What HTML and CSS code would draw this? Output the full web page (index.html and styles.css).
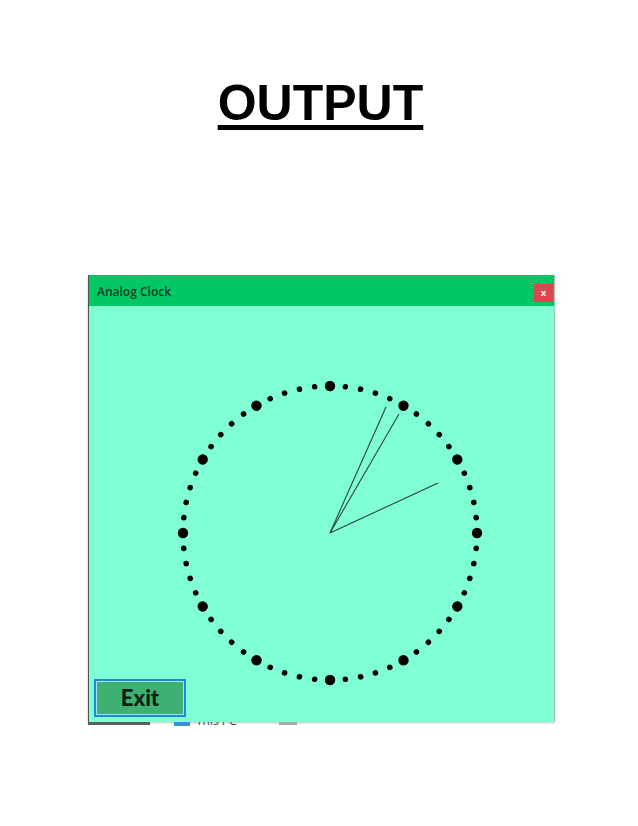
FILE: index.html
```html
<!DOCTYPE html>
<html>
<head>
<meta charset="utf-8">
<link rel="stylesheet" href="styles.css">
</head>
<body>
<h1 class="heading">OUTPUT</h1>
<div class="window">
  <div class="titlebar">
    <span class="title">Analog Clock</span>
    <span class="close">x</span>
  </div>
  <div class="client">
    <svg class="clock" width="467" height="416" viewBox="0 0 467 416">
      <g transform="translate(241 227)" fill="#000">
        <circle cx="0" cy="-147" r="5.2" transform="rotate(0)"/>
        <circle cx="0" cy="-147" r="2.8" transform="rotate(6)"/>
        <circle cx="0" cy="-147" r="2.8" transform="rotate(12)"/>
        <circle cx="0" cy="-147" r="2.8" transform="rotate(18)"/>
        <circle cx="0" cy="-147" r="2.8" transform="rotate(24)"/>
        <circle cx="0" cy="-147" r="5.2" transform="rotate(30)"/>
        <circle cx="0" cy="-147" r="2.8" transform="rotate(36)"/>
        <circle cx="0" cy="-147" r="2.8" transform="rotate(42)"/>
        <circle cx="0" cy="-147" r="2.8" transform="rotate(48)"/>
        <circle cx="0" cy="-147" r="2.8" transform="rotate(54)"/>
        <circle cx="0" cy="-147" r="5.2" transform="rotate(60)"/>
        <circle cx="0" cy="-147" r="2.8" transform="rotate(66)"/>
        <circle cx="0" cy="-147" r="2.8" transform="rotate(72)"/>
        <circle cx="0" cy="-147" r="2.8" transform="rotate(78)"/>
        <circle cx="0" cy="-147" r="2.8" transform="rotate(84)"/>
        <circle cx="0" cy="-147" r="5.2" transform="rotate(90)"/>
        <circle cx="0" cy="-147" r="2.8" transform="rotate(96)"/>
        <circle cx="0" cy="-147" r="2.8" transform="rotate(102)"/>
        <circle cx="0" cy="-147" r="2.8" transform="rotate(108)"/>
        <circle cx="0" cy="-147" r="2.8" transform="rotate(114)"/>
        <circle cx="0" cy="-147" r="5.2" transform="rotate(120)"/>
        <circle cx="0" cy="-147" r="2.8" transform="rotate(126)"/>
        <circle cx="0" cy="-147" r="2.8" transform="rotate(132)"/>
        <circle cx="0" cy="-147" r="2.8" transform="rotate(138)"/>
        <circle cx="0" cy="-147" r="2.8" transform="rotate(144)"/>
        <circle cx="0" cy="-147" r="5.2" transform="rotate(150)"/>
        <circle cx="0" cy="-147" r="2.8" transform="rotate(156)"/>
        <circle cx="0" cy="-147" r="2.8" transform="rotate(162)"/>
        <circle cx="0" cy="-147" r="2.8" transform="rotate(168)"/>
        <circle cx="0" cy="-147" r="2.8" transform="rotate(174)"/>
        <circle cx="0" cy="-147" r="5.2" transform="rotate(180)"/>
        <circle cx="0" cy="-147" r="2.8" transform="rotate(186)"/>
        <circle cx="0" cy="-147" r="2.8" transform="rotate(192)"/>
        <circle cx="0" cy="-147" r="2.8" transform="rotate(198)"/>
        <circle cx="0" cy="-147" r="2.8" transform="rotate(204)"/>
        <circle cx="0" cy="-147" r="5.2" transform="rotate(210)"/>
        <circle cx="0" cy="-147" r="2.8" transform="rotate(216)"/>
        <circle cx="0" cy="-147" r="2.8" transform="rotate(222)"/>
        <circle cx="0" cy="-147" r="2.8" transform="rotate(228)"/>
        <circle cx="0" cy="-147" r="2.8" transform="rotate(234)"/>
        <circle cx="0" cy="-147" r="5.2" transform="rotate(240)"/>
        <circle cx="0" cy="-147" r="2.8" transform="rotate(246)"/>
        <circle cx="0" cy="-147" r="2.8" transform="rotate(252)"/>
        <circle cx="0" cy="-147" r="2.8" transform="rotate(258)"/>
        <circle cx="0" cy="-147" r="2.8" transform="rotate(264)"/>
        <circle cx="0" cy="-147" r="5.2" transform="rotate(270)"/>
        <circle cx="0" cy="-147" r="2.8" transform="rotate(276)"/>
        <circle cx="0" cy="-147" r="2.8" transform="rotate(282)"/>
        <circle cx="0" cy="-147" r="2.8" transform="rotate(288)"/>
        <circle cx="0" cy="-147" r="2.8" transform="rotate(294)"/>
        <circle cx="0" cy="-147" r="5.2" transform="rotate(300)"/>
        <circle cx="0" cy="-147" r="2.8" transform="rotate(306)"/>
        <circle cx="0" cy="-147" r="2.8" transform="rotate(312)"/>
        <circle cx="0" cy="-147" r="2.8" transform="rotate(318)"/>
        <circle cx="0" cy="-147" r="2.8" transform="rotate(324)"/>
        <circle cx="0" cy="-147" r="5.2" transform="rotate(330)"/>
        <circle cx="0" cy="-147" r="2.8" transform="rotate(336)"/>
        <circle cx="0" cy="-147" r="2.8" transform="rotate(342)"/>
        <circle cx="0" cy="-147" r="2.8" transform="rotate(348)"/>
        <circle cx="0" cy="-147" r="2.8" transform="rotate(354)"/>
      </g>
      <g transform="translate(241 227)" stroke="#2a4439" stroke-width="1.1" fill="none">
        <line x1="0" y1="0" x2="56" y2="-126"/>
        <line x1="0" y1="0" x2="69" y2="-119"/>
        <line x1="0" y1="0" x2="108" y2="-50"/>
      </g>
    </svg>
    <button class="exit">Exit</button>
  </div>
</div>
<div class="strip">
  <span class="seg-dark"></span>
  <span class="seg-blue"></span>
  <span class="seg-text">This PC</span>
  <span class="seg-gray"></span>
</div>
</body>
</html>
```
FILE: styles.css
```css
html, body {
  margin: 0;
  padding: 0;
  background: #ffffff;
}
.heading {
  margin: 75px 0 0 0;
  padding: 0 0 0 3px;
  text-align: center;
  font-family: "Liberation Sans", Arial, sans-serif;
  font-weight: bold;
  font-size: 50px;
  line-height: 57px;
  color: #000;
  text-decoration: underline;
  text-decoration-thickness: 5px;
  text-underline-offset: 5px;
}
.window {
  box-sizing: border-box;
  margin: 143px 0 0 88px;
  width: 467px;
  border-left: 1px solid #4d5552;
  border-right: 1px solid #a9c6bb;
  display: flex;
  flex-direction: column;
  box-shadow: 0 1px 2px rgba(0,0,0,0.25);
}
.titlebar {
  height: 31px;
  background: #00c865;
  display: flex;
  align-items: center;
  justify-content: space-between;
  padding: 0 1px 0 8px;
}
.title {
  font-family: "Open Sans", "Noto Sans", sans-serif;
  font-size: 12px;
  font-weight: 600;
  color: #143a22;
  margin-top: 1px;
}
.close {
  width: 19px;
  height: 18px;
  background: #d8484f;
  color: #ffe8e8;
  font-family: "DejaVu Sans", sans-serif;
  font-size: 9px;
  font-weight: bold;
  display: flex;
  align-items: center;
  justify-content: center;
  margin-top: 4px;
}
.client {
  position: relative;
  height: 416px;
  background: #80ffd4;
  display: flex;
  align-items: flex-end;
  padding: 0 0 5px 5px;
  box-sizing: border-box;
}
.clock {
  position: absolute;
  left: 0;
  top: 0;
}
.exit {
  position: relative;
  box-sizing: border-box;
  width: 92px;
  height: 38px;
  background: #3db072;
  border: 2px solid #1f86d8;
  outline: 1px solid #9fe3f5;
  outline-offset: -3px;
  font-family: Lato, "Open Sans", sans-serif;
  font-weight: 900;
  font-size: 22px;
  color: #0f1f14;
  padding: 0;
  margin: 0;
  line-height: 32px;
}
.strip {
  margin-left: 88px;
  height: 4px;
  display: flex;
  align-items: flex-start;
  overflow: hidden;
}
.seg-dark {
  width: 62px;
  height: 3px;
  background: #5a5f60;
}
.seg-blue {
  width: 16px;
  height: 4px;
  background: #3a8fd6;
  margin-left: 24px;
}
.seg-text {
  margin-left: 6px;
  font-family: "Open Sans", sans-serif;
  font-size: 12px;
  line-height: 12px;
  color: #444;
  margin-top: -7px;
}
.seg-gray {
  width: 18px;
  height: 3px;
  background: #a9a9a9;
  margin-left: 42px;
}
```
